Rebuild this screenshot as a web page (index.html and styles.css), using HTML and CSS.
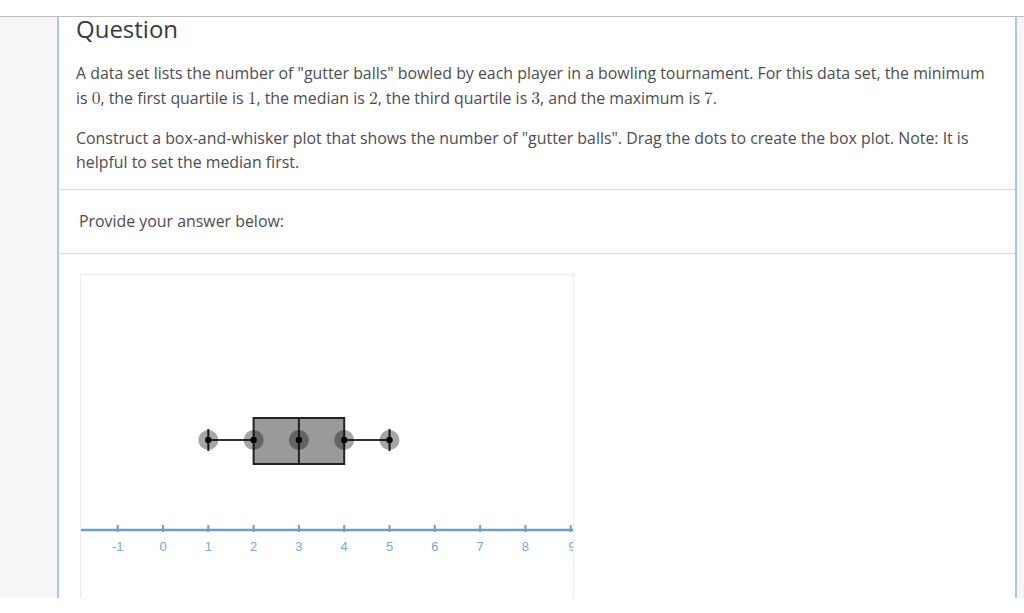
FILE: index.html
```html
<!DOCTYPE html>
<html>
<head>
<meta charset="utf-8">
<link rel="stylesheet" href="styles.css">
</head>
<body>
<div class="page">
  <div class="gutter gutter-left"></div>
  <main class="panel">
    <section class="question">
      <h1 class="title">Question</h1>
      <p class="text">A data set lists the number of "gutter balls" bowled by each player in a bowling tournament. For this data set, the minimum is <span class="math">0</span>, the first quartile is <span class="math">1</span>, the median is <span class="math">2</span>, the third quartile is <span class="math">3</span>, and the maximum is <span class="math">7</span>.</p>
      <p class="text">Construct a box-and-whisker plot that shows the number of "gutter balls". Drag the dots to create the box plot. Note: It is helpful to set the median first.</p>
    </section>
    <section class="prompt">Provide your answer below:</section>
    <section class="answer">
      <div class="graph">
        <svg class="plot" width="492" height="330" viewBox="0 0 492 330">
          <g class="axis">
            <line x1="0" y1="255" x2="492" y2="255" stroke="#6b9bd3" stroke-width="2.4"/>
            <g stroke="#6b9bd3" stroke-width="2">
              <line x1="36.7" y1="250" x2="36.7" y2="257"/>
              <line x1="82" y1="250" x2="82" y2="257"/>
              <line x1="127.3" y1="250" x2="127.3" y2="257"/>
              <line x1="172.6" y1="250" x2="172.6" y2="257"/>
              <line x1="217.9" y1="250" x2="217.9" y2="257"/>
              <line x1="263.2" y1="250" x2="263.2" y2="257"/>
              <line x1="308.5" y1="250" x2="308.5" y2="257"/>
              <line x1="353.8" y1="250" x2="353.8" y2="257"/>
              <line x1="399.1" y1="250" x2="399.1" y2="257"/>
              <line x1="444.4" y1="250" x2="444.4" y2="257"/>
              <line x1="489.7" y1="250" x2="489.7" y2="257"/>
            </g>
            <g class="labels" fill="#7aa6da" text-anchor="middle">
              <text x="36.7" y="276">-1</text>
              <text x="82" y="276">0</text>
              <text x="127.3" y="276">1</text>
              <text x="172.6" y="276">2</text>
              <text x="217.9" y="276">3</text>
              <text x="263.2" y="276">4</text>
              <text x="308.5" y="276">5</text>
              <text x="353.8" y="276">6</text>
              <text x="399.1" y="276">7</text>
              <text x="444.4" y="276">8</text>
              <text x="491" y="276">9</text>
            </g>
          </g>
          <g class="boxplot">
            <rect x="172.6" y="143" width="90.6" height="46" fill="#9a9a9a" stroke="#222" stroke-width="2"/>
            <line x1="217.9" y1="143" x2="217.9" y2="189" stroke="#222" stroke-width="2"/>
            <line x1="127.3" y1="165" x2="172.6" y2="165" stroke="#333" stroke-width="2"/>
            <line x1="263.2" y1="165" x2="308.5" y2="165" stroke="#333" stroke-width="2"/>
            <line x1="127.3" y1="154" x2="127.3" y2="176" stroke="#222" stroke-width="2"/>
            <line x1="308.5" y1="154" x2="308.5" y2="176" stroke="#222" stroke-width="2"/>
            <g fill="rgba(0,0,0,0.35)">
              <circle cx="127.3" cy="165" r="10"/>
              <circle cx="172.6" cy="165" r="10"/>
              <circle cx="217.9" cy="165" r="10"/>
              <circle cx="263.2" cy="165" r="10"/>
              <circle cx="308.5" cy="165" r="10"/>
            </g>
            <g fill="#000">
              <circle cx="127.3" cy="165" r="3.2"/>
              <circle cx="172.6" cy="165" r="3.2"/>
              <circle cx="217.9" cy="165" r="3.2"/>
              <circle cx="263.2" cy="165" r="3.2"/>
              <circle cx="308.5" cy="165" r="3.2"/>
            </g>
          </g>
        </svg>
      </div>
    </section>
  </main>
  <div class="gutter gutter-right"></div>
</div>
</body>
</html>
```

FILE: styles.css
```css
html, body {
  margin: 0;
  padding: 0;
  background: #ffffff;
}

body {
  font-family: "Open Sans", "Liberation Sans", sans-serif;
  color: #4d4d4d;
}

.page {
  margin-top: 16px;
  border-top: 1px solid #bdbdbd;
  display: flex;
  height: 581px;
  overflow: hidden;
}

.gutter {
  background: #f6f6f6;
}

.gutter-left {
  width: 57px;
  flex: none;
}

.gutter-right {
  width: 7px;
  flex: none;
}

.panel {
  flex: 1;
  min-width: 0;
  background: #ffffff;
  border-left: 2px solid #a9c9ea;
  border-right: 2px solid #a9c9ea;
  display: flex;
  flex-direction: column;
}

.question {
  padding: 0 30px 15px 17px;
  border-bottom: 1px solid #dedede;
}

.title {
  margin: 0;
  font-size: 24px;
  line-height: 24px;
  font-weight: 400;
  color: #3a3a3a;
}

.text {
  margin: 20px 0 0 0;
  font-size: 15.9px;
  line-height: 24px;
}

.text + .text {
  margin-top: 16px;
}

.math {
  font-family: "Latin Modern Roman", "Liberation Serif", "DejaVu Serif", serif;
  font-size: 17.5px;
  color: #444444;
}

.prompt {
  padding: 19px 20px 20px 20px;
  font-size: 15.9px;
  line-height: 24px;
  border-bottom: 1px solid #dedede;
}

.answer {
  padding: 20px 0 0 21px;
  flex: 1;
}

.graph {
  width: 492px;
  height: 400px;
  border: 1px solid #ececec;
  border-bottom: none;
  overflow: hidden;
}

.plot {
  display: block;
}

.labels {
  font-family: "Liberation Sans", "DejaVu Sans", sans-serif;
  font-size: 13px;
}
```
